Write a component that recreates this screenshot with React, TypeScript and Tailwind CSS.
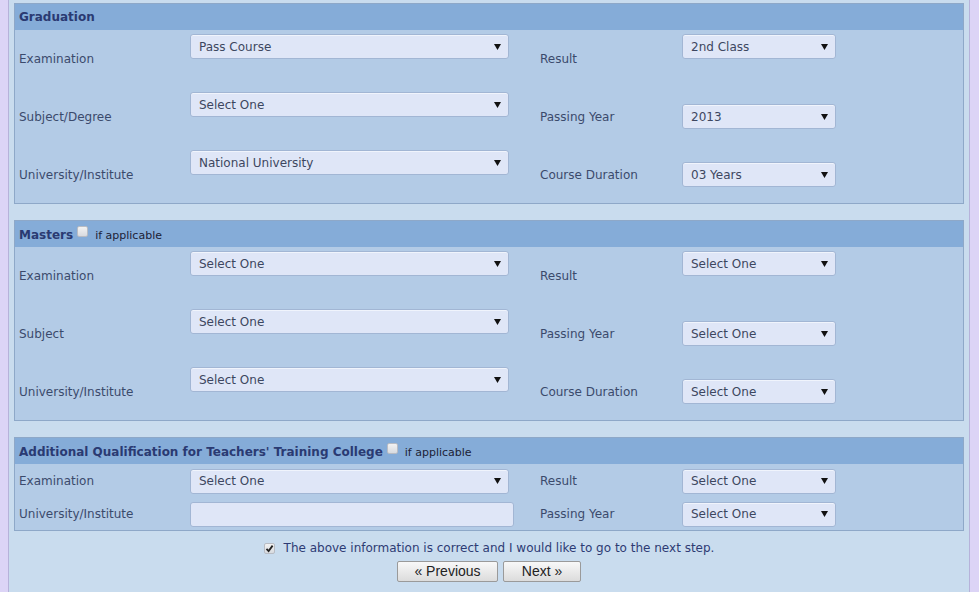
import React from "react";

const font = { fontFamily: '"DejaVu Sans", Verdana, sans-serif' };

function Arrow() {
  return (
    <svg width="7" height="6" viewBox="0 0 7 6" className="shrink-0">
      <path d="M0 0 H7 L3.5 6 Z" fill="#111" />
    </svg>
  );
}

function Select({ value, wide }: { value: string; wide?: boolean }) {
  return (
    <div
      className={`${wide ? "w-[319px]" : "w-[154px]"} h-[25px] flex items-center justify-between pl-[8px] pr-[7px] rounded-[3px] border border-[#a2b6d4] bg-[#dfe6f7] text-[12px] text-[#3d4660] shadow-[inset_0_1px_0_#f0f4fc]`}
    >
      <span>{value}</span>
      <Arrow />
    </div>
  );
}

function Box({ checked }: { checked?: boolean }) {
  return (
    <span className="inline-flex w-[11px] h-[11px] items-center justify-center rounded-[2px] border border-[#b8bcc4] bg-[linear-gradient(#f2f2f2,#d8dbe0)] shrink-0">
      {checked && (
        <svg width="9" height="9" viewBox="0 0 9 9">
          <path d="M1.5 4.8 L3.6 7 L7.6 1.6" stroke="#222" strokeWidth="1.8" fill="none" />
        </svg>
      )}
    </span>
  );
}

function Header({ title, optional }: { title: string; optional?: boolean }) {
  return (
    <div className="h-[26px] bg-[#85acd8] flex items-center pl-[4px] text-[12px]">
      <span className={`font-bold text-[#2a3a72] ${optional ? "mt-[2px]" : ""}`}>{title}</span>
      {optional && (
        <>
          <span className="ml-[4px] mt-[-2px]">
            <Box />
          </span>
          <span className="ml-[7px] mt-[4px] text-[11px] text-[#1c2236]">if applicable</span>
        </>
      )}
    </div>
  );
}

type Row = { l1: string; v1: string; l2: string; v2: string; off: boolean };

function BigRow({ r, last }: { r: Row; last?: boolean }) {
  return (
    <div className={`flex ${last ? "h-[53px]" : "h-[58px]"}`}>
      <div className="w-[175px] pl-[4px] pt-[18px] text-[12px] leading-[14px] text-[#3b4a6c]">{r.l1}</div>
      <div className="w-[350px]">
        <Select value={r.v1} wide />
      </div>
      <div className="w-[142px] pt-[18px] text-[12px] leading-[14px] text-[#3b4a6c]">{r.l2}</div>
      <div className={r.off ? "pt-[12px]" : ""}>
        <Select value={r.v2} />
      </div>
    </div>
  );
}

function BigFieldset({ title, optional, rows }: { title: string; optional?: boolean; rows: Row[] }) {
  return (
    <div className="border border-[#8ea8c8] bg-[#b3cbe6] w-[950px]">
      <Header title={title} optional={optional} />
      <div className="pt-[4px]">
        {rows.map((r, i) => (
          <BigRow key={i} r={r} last={i === rows.length - 1} />
        ))}
      </div>
    </div>
  );
}

export default function App() {
  const grad: Row[] = [
    { l1: "Examination", v1: "Pass Course", l2: "Result", v2: "2nd Class", off: false },
    { l1: "Subject/Degree", v1: "Select One", l2: "Passing Year", v2: "2013", off: true },
    { l1: "University/Institute", v1: "National University", l2: "Course Duration", v2: "03 Years", off: true },
  ];
  const masters: Row[] = [
    { l1: "Examination", v1: "Select One", l2: "Result", v2: "Select One", off: false },
    { l1: "Subject", v1: "Select One", l2: "Passing Year", v2: "Select One", off: true },
    { l1: "University/Institute", v1: "Select One", l2: "Course Duration", v2: "Select One", off: true },
  ];
  return (
    <div className="w-[979px] h-[592px] bg-[#dcd4f6] overflow-hidden" style={font}>
      <div className="ml-[8px] w-[962px] h-full border-l border-r border-[#b6b2da] bg-[#c9dcee] pl-[5px] pt-[3px]">
        <BigFieldset title="Graduation" rows={grad} />
        <div className="h-[16px]" />
        <BigFieldset title="Masters" optional rows={masters} />
        <div className="h-[16px]" />
        <div className="border border-[#8ea8c8] bg-[#b3cbe6] w-[950px]">
          <Header title="Additional Qualification for Teachers' Training College" optional />
          <div className="pt-[4px] pb-[3px]">
            <div className="flex items-center h-[33px] pb-[7px]">
              <div className="w-[175px] pl-[4px] text-[12px] text-[#3b4a6c]">Examination</div>
              <div className="w-[350px]">
                <Select value="Select One" wide />
              </div>
              <div className="w-[142px] text-[12px] text-[#3b4a6c]">Result</div>
              <Select value="Select One" />
            </div>
            <div className="flex items-center h-[26px]">
              <div className="w-[175px] pl-[4px] text-[12px] text-[#3b4a6c]">University/Institute</div>
              <div className="w-[350px]">
                <div className="w-[324px] h-[25px] rounded-[3px] border border-[#a2b6d4] bg-[#dfe6f7]" />
              </div>
              <div className="w-[142px] text-[12px] text-[#3b4a6c]">Passing Year</div>
              <Select value="Select One" />
            </div>
          </div>
        </div>
        <div className="w-[950px] flex justify-center items-center gap-[9px] mt-[7px] h-[20px]">
          <Box checked />
          <span className="text-[12px] text-[#2e3b74]">The above information is correct and I would like to go to the next step.</span>
        </div>
        <div className="w-[950px] flex justify-center gap-[5px] mt-[3px]" style={{ fontFamily: '"Liberation Sans", Arial, sans-serif' }}>
          <button className="w-[101px] h-[21px] border border-[#9a9a9a] rounded-[2px] bg-[linear-gradient(#f8f8f8,#dcdcdc)] text-[14px] leading-[19px] text-[#222]">
            « Previous
          </button>
          <button className="w-[78px] h-[21px] border border-[#9a9a9a] rounded-[2px] bg-[linear-gradient(#f8f8f8,#dcdcdc)] text-[14px] leading-[19px] text-[#222]">
            Next »
          </button>
        </div>
      </div>
    </div>
  );
}
